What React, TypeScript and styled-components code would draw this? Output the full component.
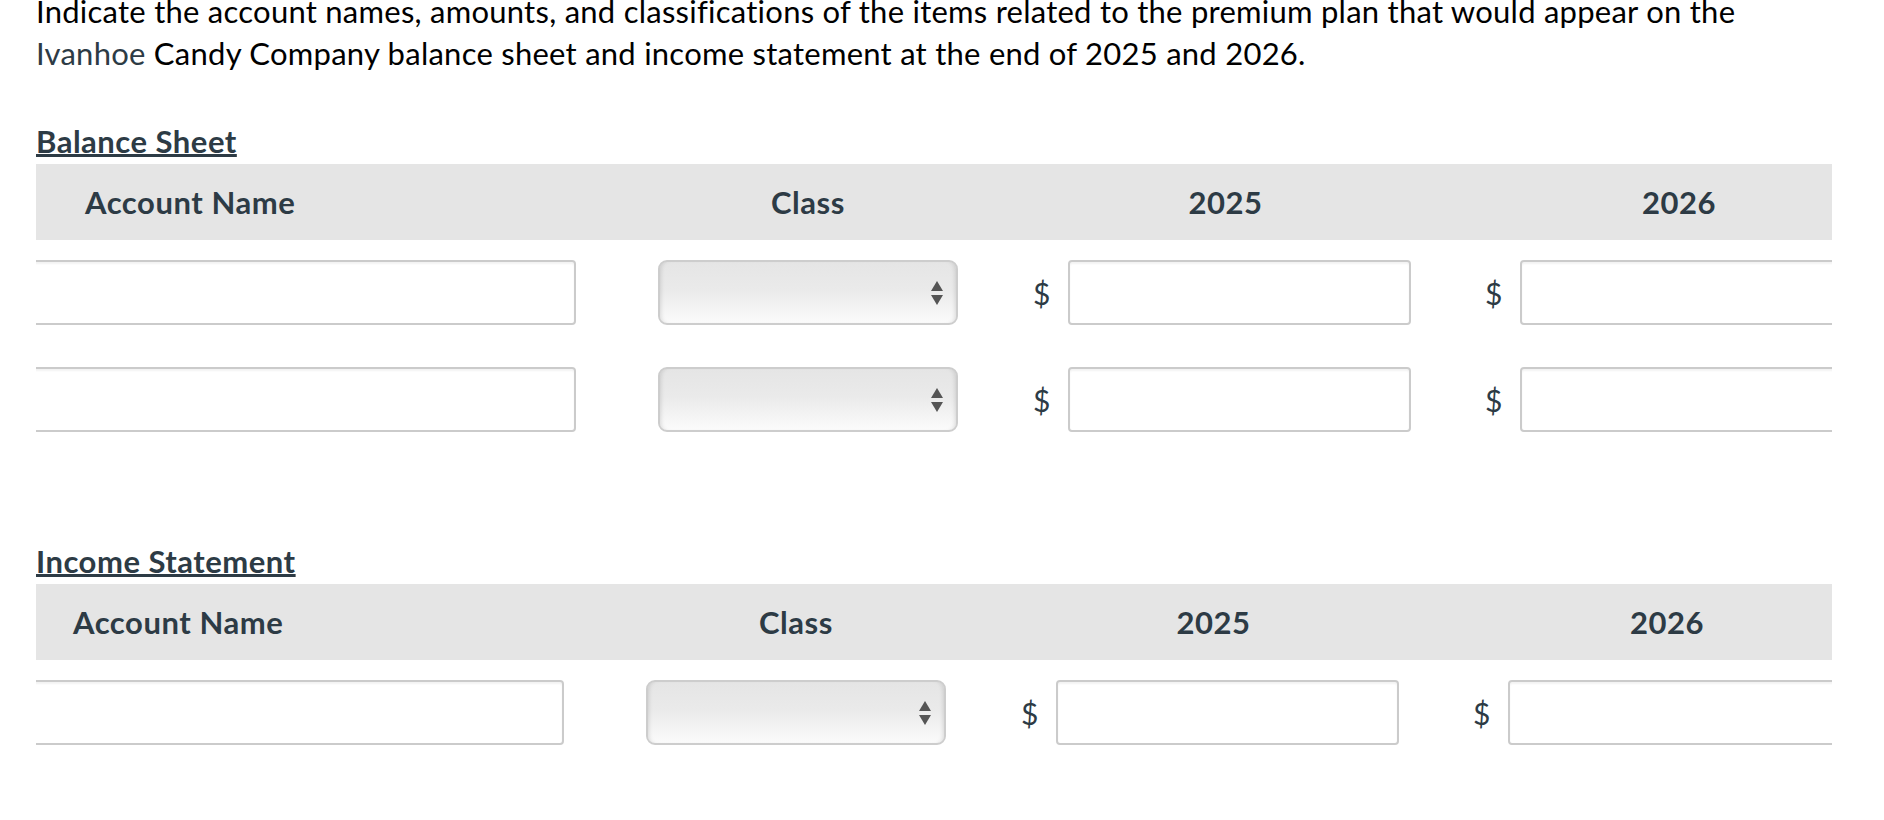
import React from 'react'
import styled, { createGlobalStyle, css } from 'styled-components'

const GlobalStyle = createGlobalStyle`
  html, body {
    margin: 0;
    padding: 0;
    background: #fff;
  }
  body {
    font-family: Lato, "Open Sans", "Liberation Sans", sans-serif;
    color: #000;
  }
`

const slate = '#2d3b45'

const Page = styled.div`
  height: 820px;
  padding: 0 52px 0 36px;
  overflow: hidden;
`

const Prompt = styled.p`
  margin: -10px 0 0;
  font-size: 31px;
  line-height: 42px;
  letter-spacing: 0.25px;
  color: #000;
`

const Company = styled.span`
  color: ${slate};
`

const Section = styled.section<{ $top: number }>`
  margin-top: ${({ $top }) => $top}px;
`

const SectionTitle = styled.h2`
  margin: 0 0 5px;
  font-size: 31px;
  font-weight: 700;
  line-height: 36px;
  letter-spacing: 0.5px;
  color: ${slate};
  text-decoration: underline;
  text-decoration-thickness: 3px;
  text-underline-offset: 1px;
`

const Clip = styled.div`
  overflow: hidden;
`

const Inner = styled.div<{ $shift: number }>`
  width: 1860px;
  margin-left: -${({ $shift }) => $shift}px;
`

const columns = css`
  display: grid;
  grid-template-columns: 600px 364px 482px 414px;
`

const HeadRow = styled.div`
  ${columns};
  height: 76px;
  background: #e5e5e5;
`

const HeadCell = styled.div<{ $align: 'left' | 'center'; $padL?: number; $padR?: number }>`
  display: flex;
  align-items: center;
  justify-content: ${({ $align }) => ($align === 'left' ? 'flex-start' : 'center')};
  padding-left: ${({ $padL }) => $padL || 0}px;
  padding-right: ${({ $padR }) => $padR || 0}px;
  font-size: 31px;
  font-weight: 700;
  letter-spacing: 0.55px;
  color: ${slate};
`

const Body = styled.div`
  display: flex;
  flex-direction: column;
  gap: 42px;
  padding-top: 20px;
`

const Row = styled.div`
  ${columns};
  height: 65px;
`

const Cell = styled.div<{ $pad: number }>`
  display: flex;
  align-items: center;
  padding-left: ${({ $pad }) => $pad}px;
`

const TextInput = styled.input<{ $w: number }>`
  box-sizing: border-box;
  width: ${({ $w }) => $w}px;
  height: 65px;
  margin: 0;
  padding: 0 12px;
  border: 2px solid #cbcbcb;
  border-radius: 4px;
  background: #fff;
  box-shadow: inset 0 2px 2px rgba(0, 0, 0, 0.05);
  font: inherit;
  font-size: 28px;
  outline: none;
`

const SelectWrap = styled.div`
  position: relative;
  width: 300px;
  height: 65px;
`

const Select = styled.select`
  appearance: none;
  box-sizing: border-box;
  width: 100%;
  height: 100%;
  margin: 0;
  border: 2px solid #cdcdcd;
  border-radius: 9px;
  background: linear-gradient(to bottom, #e5e5e5 0%, #eaeaea 45%, #fbfbfb 100%);
  box-shadow: inset 4px 0 4px -3px rgba(0, 0, 0, 0.12),
    inset -4px 0 4px -3px rgba(0, 0, 0, 0.12);
  outline: none;
`

const Arrows = styled.svg`
  position: absolute;
  right: 15px;
  top: 50%;
  transform: translateY(-50%);
  pointer-events: none;
`

const Dollar = styled.span`
  width: 35px;
  font-size: 30px;
  line-height: 1;
  color: ${slate};
`

const SelectArrows = () => (
  <Arrows width="12" height="24" viewBox="0 0 12 24">
    <polygon points="0,10 6,0 12,10" fill="#555" />
    <polygon points="0,14 12,14 6,24" fill="#555" />
  </Arrows>
)

const EntryRow: React.FC = () => (
  <Row>
    <Cell $pad={0}>
      <TextInput type="text" $w={550} />
    </Cell>
    <Cell $pad={32}>
      <SelectWrap>
        <Select defaultValue="">
          <option value="" />
        </Select>
        <SelectArrows />
      </SelectWrap>
    </Cell>
    <Cell $pad={43}>
      <Dollar>$</Dollar>
      <TextInput type="text" $w={343} />
    </Cell>
    <Cell $pad={13}>
      <Dollar>$</Dollar>
      <TextInput type="text" $w={343} />
    </Cell>
  </Row>
)

type StatementProps = {
  title: string
  rows: number
  shift: number
  top: number
}

const Statement: React.FC<StatementProps> = ({ title, rows, shift, top }) => (
  <Section $top={top}>
    <SectionTitle>{title}</SectionTitle>
    <Clip>
      <Inner $shift={shift}>
        <HeadRow>
          <HeadCell $align="left" $padL={59}>Account Name</HeadCell>
          <HeadCell $align="center">Class</HeadCell>
          <HeadCell $align="center" $padR={11}>2025</HeadCell>
          <HeadCell $align="center">2026</HeadCell>
        </HeadRow>
        <Body>
          {Array.from({ length: rows }).map((_, i) => (
            <EntryRow key={i} />
          ))}
        </Body>
      </Inner>
    </Clip>
  </Section>
)

const App: React.FC = () => (
  <>
    <GlobalStyle />
    <Page>
      <Prompt>
        Indicate the account names, amounts, and classifications of the items related to the premium plan that would appear on the
        <br />
        <Company>Ivanhoe</Company> Candy Company balance sheet and income statement at the end of 2025 and 2026.
      </Prompt>
      <Statement title="Balance Sheet" rows={2} shift={10} top={49} />
      <Statement title="Income Statement" rows={1} shift={22} top={111} />
    </Page>
  </>
)

export default App
